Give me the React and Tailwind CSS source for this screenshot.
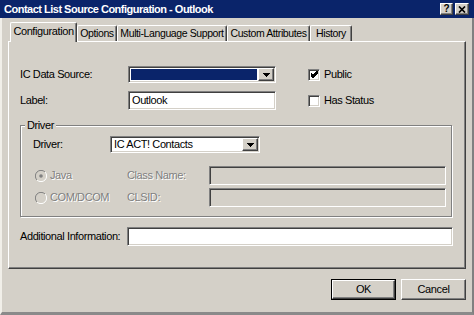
import React from 'react';

// Win classic 3D edges
const sunken =
  'border-t border-l border-t-[#808080] border-l-[#808080] border-b border-r border-b-white border-r-white shadow-[inset_1px_1px_0_#404040,inset_-1px_-1px_0_#d4d0c8]';
const raised =
  'border-t border-l border-t-white border-l-white border-b border-r border-b-[#404040] border-r-[#404040] shadow-[inset_-1px_-1px_0_#808080]';
const disabledText = 'text-[#808080] [text-shadow:1px_1px_0_#ffffff]';

const tabs = [
  { label: 'Configuration', width: 'w-[67px]', active: true },
  { label: 'Options', width: 'w-[40px]' },
  { label: 'Multi-Language Support', width: 'w-[110px]' },
  { label: 'Custom Attributes', width: 'w-[83px]' },
  { label: 'History', width: 'w-[42px]' },
];

const DropArrow = () => (
  <div className={`w-[16px] h-full shrink-0 bg-[#d4d0c8] flex items-center justify-center ${raised}`}>
    <svg width="7" height="4" viewBox="0 0 7 4" shapeRendering="crispEdges">
      <rect x="0" y="0" width="7" height="1" fill="#000" />
      <rect x="1" y="1" width="5" height="1" fill="#000" />
      <rect x="2" y="2" width="3" height="1" fill="#000" />
      <rect x="3" y="3" width="1" height="1" fill="#000" />
    </svg>
  </div>
);

const Check = ({ checked }) => (
  <div className={`w-[12px] h-[12px] shrink-0 bg-white flex items-center justify-center ${sunken}`}>
    {checked && (
      <svg width="7" height="7" viewBox="0 0 7 7" shapeRendering="crispEdges">
        <path d="M0 2.5 L2 4.5 L6.5 0 M0 3.5 L2 5.5 L6.5 1 M0 4.5 L2 6.5 L6.5 2" stroke="#000" strokeWidth="1" fill="none" />
      </svg>
    )}
  </div>
);

const Radio = ({ checked }) => (
  <svg width="12" height="12" viewBox="0 0 12 12" className="shrink-0">
    <circle cx="6" cy="6" r="5.5" fill="#d4d0c8" />
    <path d="M10 2 A5.6 5.6 0 0 0 2 10" stroke="#808080" fill="none" />
    <path d="M2 10 A5.6 5.6 0 0 0 10 2" stroke="#ffffff" fill="none" />
    {checked && <circle cx="6" cy="6" r="1.8" fill="#808080" />}
  </svg>
);

export default function App() {
  return (
    <div className="w-[474px] h-[315px] flex flex-col overflow-hidden bg-[#d4d0c8] text-black text-[11px] leading-[13px] tracking-[-0.4px] font-['Liberation_Sans',Arial,sans-serif] select-none">
      {/* Title bar */}
      <div className="h-[18px] shrink-0 bg-[#0a246a] flex items-center pl-[4px] pr-[5px]">
        <span className="flex-1 text-white font-bold tracking-[-0.5px]">
          Contact List Source Configuration - Outlook
        </span>
        <div className={`w-[13px] h-[12px] bg-[#d4d0c8] flex items-center justify-center ${raised}`}>
          <span className="font-bold text-[10px] leading-[10px] tracking-normal">?</span>
        </div>
        <div className={`ml-[2px] w-[14px] h-[12px] bg-[#d4d0c8] flex items-center justify-center ${raised}`}>
          <svg width="8" height="7" viewBox="0 0 8 7">
            <path d="M1 0.5 L7 6.5 M7 0.5 L1 6.5" stroke="#000" strokeWidth="1.7" />
          </svg>
        </div>
      </div>

      <div className="flex-1 flex flex-col border-l-2 border-l-[#f1efe9] border-r-2 border-r-[#808080] border-b-[3px] border-b-[#8a8a8a]">
        {/* Tabs */}
        <div className="mt-[4px] ml-[8px] h-[19px] flex items-end">
          {tabs.map((t) =>
            t.active ? (
              <div
                key={t.label}
                className={`relative z-10 -mb-px h-[20px] ${t.width} bg-[#d4d0c8] border-t border-l border-t-white border-l-white border-r border-r-[#404040] shadow-[inset_-1px_0_0_#808080] rounded-t-[2px] flex items-center justify-center pb-[2px]`}
              >
                {t.label}
              </div>
            ) : (
              <div
                key={t.label}
                className={`h-[16px] ${t.width} border-t border-l border-t-white border-l-white border-r border-r-[#404040] shadow-[inset_-1px_0_0_#808080] rounded-t-[2px] flex items-center justify-center text-[10.5px]`}
              >
                {t.label}
              </div>
            )
          )}
        </div>

        {/* Tab panel */}
        <div className="ml-[6px] w-[458px] h-[228px] shrink-0 border-t border-l border-t-white border-l-white border-r border-b border-r-[#404040] border-b-[#404040] shadow-[inset_-1px_-1px_0_#808080] pt-[24px] pl-[11px]">
          <div className="flex items-center h-[17px]">
            <div className="w-[108px]">IC Data Source:</div>
            <div className={`w-[148px] h-[17px] bg-white flex p-px ${sunken}`}>
              <div className="flex-1 m-px bg-[#0a246a]" />
              <DropArrow />
            </div>
            <div className="ml-[32px] flex items-center">
              <Check checked />
              <span className="ml-[4px]">Public</span>
            </div>
          </div>

          <div className="mt-[8px] flex items-center h-[19px]">
            <div className="w-[108px]">Label:</div>
            <div className={`w-[148px] h-[19px] bg-white flex items-center pl-[3px] ${sunken}`}>Outlook</div>
            <div className="ml-[32px] flex items-center">
              <Check />
              <span className="ml-[4px]">Has Status</span>
            </div>
          </div>

          {/* Driver group */}
          <div className="mt-[15px] w-[432px] h-[92px] flex flex-col border border-[#808080] shadow-[1px_1px_0_#ffffff,inset_1px_1px_0_#ffffff]">
            <div className="-mt-[7px] ml-[4px] px-[2px] self-start h-[13px] bg-[#d4d0c8]">Driver</div>

            <div className="mt-[4px] ml-[12px] flex items-center h-[17px]">
              <div className="w-[77px]">Driver:</div>
              <div className={`w-[150px] h-[17px] bg-white flex p-px ${sunken}`}>
                <div className="flex-1 flex items-center pl-[2px]">IC ACT! Contacts</div>
                <DropArrow />
              </div>
            </div>

            <div className="mt-[13px] ml-[14px] flex items-center h-[19px]">
              <div className="w-[92px] flex items-center">
                <Radio checked />
                <span className={`ml-[3px] ${disabledText}`}>Java</span>
              </div>
              <div className={`w-[82px] ${disabledText}`}>Class Name:</div>
              <div className={`w-[237px] h-[19px] bg-[#d4d0c8] ${sunken}`} />
            </div>

            <div className="mt-[3px] ml-[14px] flex items-center h-[19px]">
              <div className="w-[92px] flex items-center">
                <Radio />
                <span className={`ml-[3px] ${disabledText}`}>COM/DCOM</span>
              </div>
              <div className={`w-[82px] ${disabledText}`}>CLSID:</div>
              <div className={`w-[237px] h-[19px] bg-[#d4d0c8] ${sunken}`} />
            </div>
          </div>

          <div className="mt-[10px] flex items-center h-[19px]">
            <div className="w-[107px]">Additional Information:</div>
            <div className={`w-[326px] h-[19px] bg-white ${sunken}`} />
          </div>
        </div>

        {/* Buttons */}
        <div className="mt-[10px] pr-[6px] flex justify-end gap-[5px]">
          <div className="w-[65px] h-[21px] border border-black">
            <div className={`h-full flex items-center justify-center ${raised}`}>OK</div>
          </div>
          <div className={`w-[65px] h-[21px] flex items-center justify-center ${raised}`}>Cancel</div>
        </div>
      </div>
    </div>
  );
}
